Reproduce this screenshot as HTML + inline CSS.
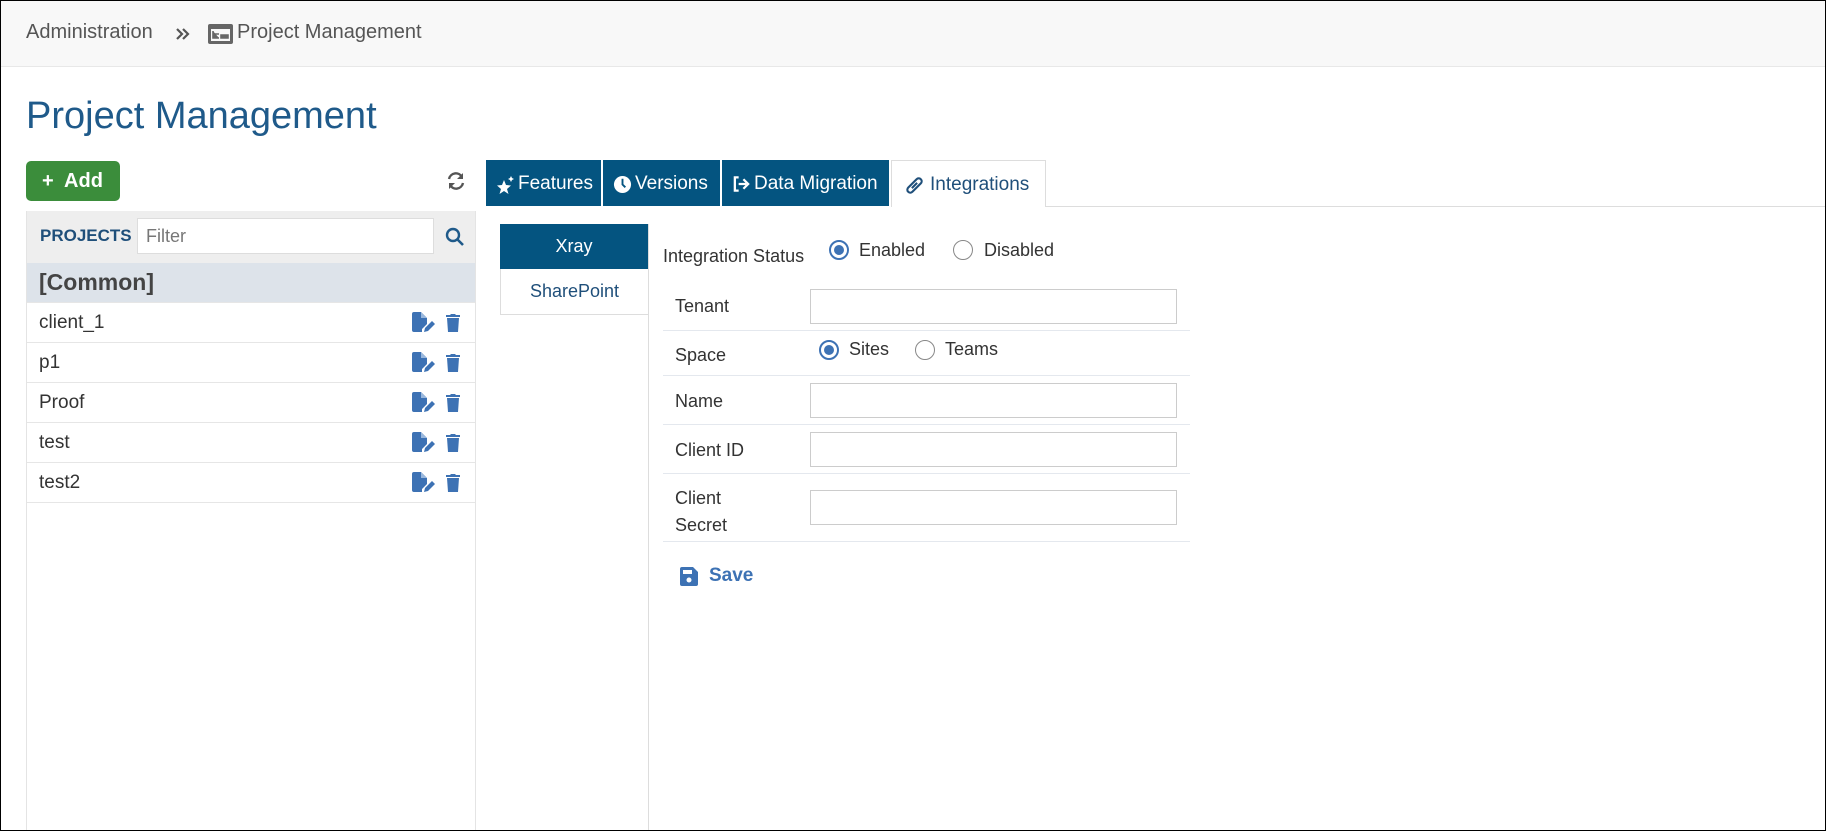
<!DOCTYPE html>
<html><head><meta charset="utf-8"><style>
*{box-sizing:border-box;margin:0;padding:0}
body{width:1826px;height:831px;overflow:hidden;background:#fff;font-family:"Liberation Sans",sans-serif;color:#333;position:relative}
.frame{position:absolute;inset:0;border:1px solid #000;pointer-events:none;z-index:10}
.hdr{position:absolute;left:0;top:0;width:1826px;height:67px;background:#f8f8f8;border-bottom:1px solid #e8e8e8}
.a{position:absolute;white-space:nowrap}
.bc{font-size:20px;color:#555;top:21px}
.title{left:26px;top:95px;font-size:38px;color:#1f5a8a}
.add{left:26px;top:161px;width:94px;height:40px;background:#3b8d3b;border-radius:5px;color:#fff;font-size:20px;font-weight:bold;padding:9px 0 0 16px}
.lp{position:absolute;left:26px;top:211px;width:450px;height:620px;border-left:1px solid #e4e4e4;border-right:1px solid #e4e4e4}
.ph{position:absolute;left:0;top:0;width:100%;height:52px;background:#eee}
.row{position:absolute;left:0;width:100%;height:40px;border-bottom:1px solid #e6e6e6;font-size:19px;padding:9px 0 0 12px}
.tab{position:absolute;top:160px;height:46px;background:#045480;color:#fff;font-size:19px;padding:13px 0 0 34px}
.tab svg{position:absolute;left:10px;top:15px}
.lbl{font-size:18px;color:#333}
.inp{position:absolute;left:810px;width:367px;height:35px;border:1px solid #ccc;background:#fff}
.fr{position:absolute;left:663px;width:527px;border-bottom:1px solid #e4e8ee}
.rad{position:absolute;width:20px;height:20px;border-radius:50%;border:1.5px solid #888;background:#fff}
.rad.on{border:2px solid #3d72b4}
.rad.on::after{content:"";position:absolute;left:3px;top:3px;width:10px;height:10px;border-radius:50%;background:#3d72b4}
</style></head><body>
<div class="hdr"></div>
<div class="a bc" style="left:26px">Administration</div>
<svg class="a" style="left:175px;top:27px" width="16" height="14" viewBox="0 0 16 14"><path d="M2 2l5 5-5 5M8 2l5 5-5 5" stroke="#555" stroke-width="2.2" fill="none"/></svg>
<svg class="a" style="left:207px;top:23px" width="27" height="22" viewBox="0 0 27 22"><rect x="1" y="1" width="25" height="20" rx="2" fill="#666"/><rect x="4" y="6" width="19" height="12" fill="#f8f8f8"/><path d="M6 8v7h6M12 11h-5M14 12h7v3h-7z" stroke="#666" stroke-width="1.6" fill="#666"/></svg>
<div class="a bc" style="left:237px">Project Management</div>
<div class="a title">Project Management</div>
<div class="a add">+&nbsp; Add</div>
<svg class="a" style="left:446px;top:171px" width="20" height="20" viewBox="0 0 20 20"><path d="M3 8a7 7 0 0 1 13-2M17 12a7 7 0 0 1-13 2" stroke="#555" stroke-width="2.4" fill="none"/><path d="M17 2v6h-6zM3 18v-6h6z" fill="#555"/></svg>
<div class="lp">
<div class="ph"></div>
<div class="a" style="left:13px;top:15px;font-size:17px;font-weight:bold;color:#1f4f7a">PROJECTS</div>
<div class="a" style="left:110px;top:7px;width:297px;height:36px;background:#fff;border:1px solid #ddd;font-size:18px;color:#777;padding:7px 8px">Filter</div>
<svg class="a" style="left:418px;top:16px" width="20" height="20" viewBox="0 0 20 20"><circle cx="8" cy="8" r="6" stroke="#1f5a8a" stroke-width="2.4" fill="none"/><path d="M12.5 12.5l5.5 5.5" stroke="#1f5a8a" stroke-width="2.6"/></svg>
<div class="row" style="top:52px;background:#dde3ea;font-weight:bold;font-size:23px;padding-top:6px;color:#444">[Common]</div>
<div class="row" style="top:92px">client_1</div>
<div class="row" style="top:132px">p1</div>
<div class="row" style="top:172px">Proof</div>
<div class="row" style="top:212px">test</div>
<div class="row" style="top:252px">test2</div>
</div>
<svg width="0" height="0" style="position:absolute"><defs>
<g id="ic"><path d="M0 2q0-2 2-2h7l6 6v6l-5 5v3h-8q-2 0-2-2z" fill="#3d72b4"/><path d="M9 0v6h6z" fill="#9ab8dd"/><path d="M12 20l1-4 7-7 3 3-7 7z" fill="#3d72b4"/>
<path d="M39 2h4l1 1h4v2h-14v-2h4z M35 6h12l-1 14h-10z" fill="#3d72b4"/></g></defs></svg>
<svg class="a" style="left:412px;top:312px" width="52" height="22"><use href="#ic"/></svg>
<svg class="a" style="left:412px;top:352px" width="52" height="22"><use href="#ic"/></svg>
<svg class="a" style="left:412px;top:392px" width="52" height="22"><use href="#ic"/></svg>
<svg class="a" style="left:412px;top:432px" width="52" height="22"><use href="#ic"/></svg>
<svg class="a" style="left:412px;top:472px" width="52" height="22"><use href="#ic"/></svg>

<div class="a" style="left:1046px;top:206px;width:780px;border-top:1px solid #ddd"></div>
<div class="tab" style="left:486px;width:115px;padding-left:32px"><svg width="20" height="20" viewBox="0 0 20 20"><path d="M8 5l2 5 5 .5-4 3.5 1.5 5-4.5-3-4.5 3 1.5-5-4-3.5 5-.5z" fill="#fff"/><path d="M15 1l1 2 2 1-2 1-1 2-1-2-2-1 2-1z" fill="#fff"/></svg>Features</div>
<div class="tab" style="left:603px;width:117px;padding-left:32px"><svg width="19" height="19" viewBox="0 0 20 20"><circle cx="10" cy="10" r="9" fill="#fff"/><path d="M10 4v6l3 3" stroke="#045480" stroke-width="2" fill="none"/></svg>Versions</div>
<div class="tab" style="left:722px;width:167px;padding-left:32px"><svg width="19" height="18" viewBox="0 0 20 18"><path d="M7 2h-4v14h4" stroke="#fff" stroke-width="2.4" fill="none"/><path d="M7 9h8M12 4l5 5-5 5" stroke="#fff" stroke-width="2.4" fill="none"/></svg>Data Migration</div>
<div class="tab" style="left:891px;width:155px;background:#fff;color:#1f4f7a;border:1px solid #ddd;border-bottom:none;height:47px;padding-left:38px"><svg style="left:12px;top:14px" width="21" height="21" viewBox="0 0 20 20"><path d="M9 7l-5 5a2.8 2.8 0 0 0 4 4l3-3M11 13l5-5a2.8 2.8 0 0 0-4-4l-3 3M7.5 12.5l5-5" stroke="#1f4f7a" stroke-width="2" fill="none"/></svg>Integrations</div>
<div class="a" style="left:500px;top:224px;width:148px;height:45px;background:#045480;color:#fff;font-size:18px;text-align:center;padding-top:12px">Xray</div>
<div class="a" style="left:500px;top:269px;width:148px;height:46px;border-left:1px solid #ddd;border-bottom:1px solid #ddd;color:#1f4f7a;font-size:18px;text-align:center;padding-top:12px">SharePoint</div>
<div class="a" style="left:648px;top:224px;height:607px;border-left:1px solid #ddd"></div>

<div class="a lbl" style="left:663px;top:246px">Integration Status</div>
<div class="rad on" style="left:829px;top:240px"></div><div class="a lbl" style="left:859px;top:240px">Enabled</div>
<div class="rad" style="left:953px;top:240px"></div><div class="a lbl" style="left:984px;top:240px">Disabled</div>

<div class="fr" style="top:284px;height:47px"></div>
<div class="a lbl" style="left:675px;top:296px">Tenant</div><div class="inp" style="top:289px"></div>
<div class="fr" style="top:331px;height:45px"></div>
<div class="a lbl" style="left:675px;top:345px">Space</div>
<div class="rad on" style="left:819px;top:340px"></div><div class="a lbl" style="left:849px;top:339px">Sites</div>
<div class="rad" style="left:915px;top:340px"></div><div class="a lbl" style="left:945px;top:339px">Teams</div>
<div class="fr" style="top:376px;height:49px"></div>
<div class="a lbl" style="left:675px;top:391px">Name</div><div class="inp" style="top:383px"></div>
<div class="fr" style="top:425px;height:49px"></div>
<div class="a lbl" style="left:675px;top:440px">Client ID</div><div class="inp" style="top:432px"></div>
<div class="fr" style="top:474px;height:68px"></div>
<div class="a lbl" style="left:675px;top:485px;line-height:27px">Client<br>Secret</div><div class="inp" style="top:490px"></div>
<svg class="a" style="left:680px;top:567px" width="18" height="19" viewBox="0 0 18 19"><path d="M0 2q0-2 2-2h11l5 5v12q0 2-2 2h-14q-2 0-2-2z" fill="#3d72b4"/><rect x="3" y="3" width="9" height="4" fill="#fff"/><circle cx="9" cy="13" r="2.5" fill="#fff"/></svg>
<div class="a" style="left:709px;top:565px;font-size:19px;font-weight:bold;color:#3d72b4">Save</div>
<div class="frame"></div>
</body></html>
